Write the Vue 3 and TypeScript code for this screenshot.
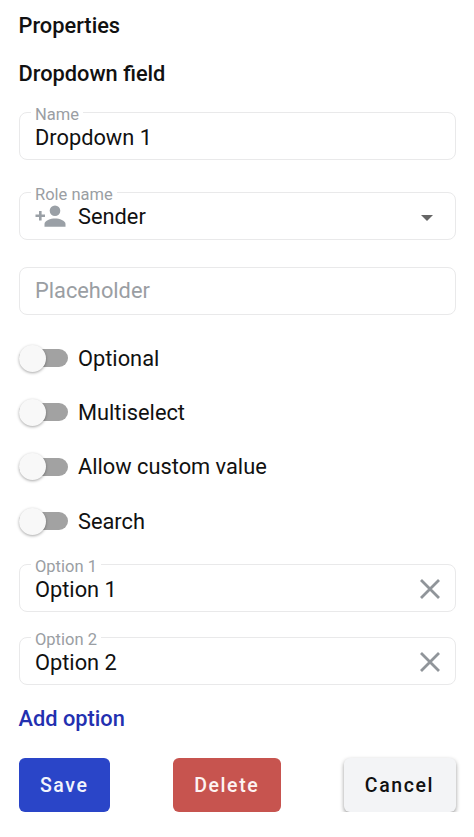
<script setup lang="ts">
const toggles = ['Optional', 'Multiselect', 'Allow custom value', 'Search']
const options = ['Option 1', 'Option 2']
</script>

<template>
  <div class="panel">
    <h1 class="title">Properties</h1>
    <h2 class="subtitle">Dropdown field</h2>

    <div class="field name-field">
      <span class="legend">Name</span>
      <span class="value">Dropdown 1</span>
    </div>

    <div class="field role-field">
      <span class="legend">Role name</span>
      <svg class="person" viewBox="0 0 32 22" width="32" height="22">
        <path d="M21 11a5.3 5.3 0 1 0 0-10.600a5.300 5.300 0 0 0 0 10.600z" />
        <path d="M21 13.500c-4.400 0-10.500 2-10.500 5.500v2.800h21V19c0-3.500-6.100-5.500-10.500-5.500z" />
        <path d="M5 6h2.600v3.400H11V12H7.600v3.400H5V12H1.500V9.400H5z" />
      </svg>
      <span class="value sender">Sender</span>
      <span class="caret"></span>
    </div>

    <div class="field placeholder-field">
      <span class="placeholder">Placeholder</span>
    </div>

    <div class="toggles">
      <div v-for="label in toggles" :key="label" class="toggle-row">
        <span class="switch"><span class="knob"></span></span>
        <span class="toggle-label">{{ label }}</span>
      </div>
    </div>

    <div class="options">
      <div v-for="opt in options" :key="opt" class="field">
        <span class="legend">{{ opt }}</span>
        <span class="value">{{ opt }}</span>
        <svg class="close" viewBox="0 0 20 20" width="20" height="20">
          <path d="M1 1l18 18M19 1L1 19" />
        </svg>
      </div>
    </div>

    <a class="add-option">Add option</a>

    <div class="actions">
      <button class="btn save">Save</button>
      <button class="btn delete">Delete</button>
      <button class="btn cancel">Cancel</button>
    </div>
  </div>
</template>

<style scoped>
.panel {
  padding: 13px 18.500px 0 18.500px;
  font-family: Roboto, sans-serif;
  color: #111;
  box-sizing: border-box;
}

.title {
  margin: 0;
  font-size: 21.800px;
  line-height: 26px;
  font-weight: 500;
}

.subtitle {
  margin: 21.500px 0 0;
  font-size: 21.800px;
  line-height: 26px;
  font-weight: 500;
}

.field {
  position: relative;
  display: flex;
  align-items: center;
  height: 48px;
  box-sizing: border-box;
  padding: 3px 16px 0 15.500px;
  border: 1px solid #e9e9ea;
  border-radius: 8px;
  background: #fff;
}

.name-field {
  margin-top: 25.500px;
}

.role-field {
  margin-top: 32px;
}

.placeholder-field {
  margin-top: 27px;
}

.legend {
  position: absolute;
  top: -6px;
  left: 11.500px;
  padding: 0 4px;
  background: #fff;
  font-size: 16.500px;
  line-height: 16px;
  color: #9a9ea3;
}

.value {
  font-size: 21.800px;
  line-height: 28px;
}

.sender {
  position: relative;
  top: -1px;
}

.placeholder {
  position: relative;
  top: -1.500px;
  font-size: 21.800px;
  line-height: 28px;
  color: #9a9ea3;
}

.person {
  flex: none;
  margin-right: 12px;
  margin-left: -1px;
  position: relative;
  top: -2px;
}

.person path {
  fill: #9aa0a6;
}

.caret {
  margin-left: auto;
  margin-right: 5.500px;
  border-left: 6.500px solid transparent;
  border-right: 6.500px solid transparent;
  border-top: 6.500px solid #666;
}

.toggles {
  display: flex;
  flex-direction: column;
  gap: 26.400px;
  margin-top: 29px;
}

.toggle-row {
  display: flex;
  align-items: center;
  height: 28px;
}

.switch {
  position: relative;
  flex: none;
  width: 49px;
  height: 18px;
  border-radius: 9px;
  background: #a2a2a2;
}

.knob {
  position: absolute;
  top: -4.500px;
  left: 0;
  width: 27px;
  height: 27px;
  border-radius: 50%;
  background: #f8f8f8;
  box-shadow: 0 1px 3px rgba(0, 0, 0, 0.35);
}

.toggle-label {
  margin-left: 10.500px;
  padding-top: 1px;
  font-size: 21.800px;
  line-height: 28px;
}

.options {
  display: flex;
  flex-direction: column;
  gap: 25px;
  margin-top: 29px;
}

.close {
  margin-left: auto;
  margin-right: -1px;
  position: relative;
  top: -1px;
}

.close path {
  fill: none;
  stroke: #90959a;
  stroke-width: 2.800px;
}

.add-option {
  display: block;
  margin-top: 20px;
  font-size: 21.800px;
  line-height: 28px;
  font-weight: 500;
  color: #2330b0;
}

.actions {
  display: flex;
  justify-content: space-between;
  margin-top: 24.800px;
}

.btn {
  height: 54px;
  padding-top: 2px;
  border: none;
  border-radius: 6px;
  font-family: Roboto, sans-serif;
  font-size: 19.500px;
  font-weight: 500;
  letter-spacing: 1.600px;
}

.save {
  width: 91.500px;
  background: #2a45c8;
  color: #f2f4fc;
}

.delete {
  width: 108px;
  background: #c7544f;
  color: #fdf3f2;
}

.cancel {
  width: 112px;
  background: #f3f4f6;
  color: #111;
  box-shadow: 0 2px 4px rgba(0, 0, 0, 0.4);
}
</style>
